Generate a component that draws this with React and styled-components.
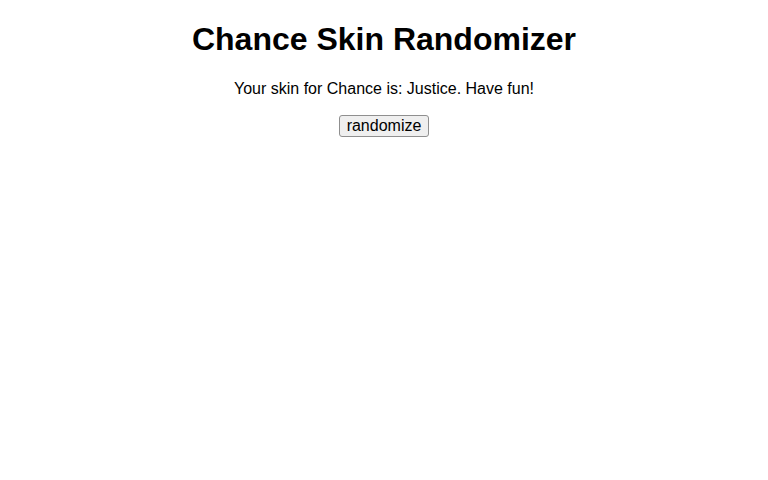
import React, { useState } from "react";
import styled, { createGlobalStyle } from "styled-components";

const skins = ["Justice", "Original", "Dark Matter", "Sakura", "Vanguard"];

const GlobalStyle = createGlobalStyle`
	body {
		margin: 8px;
		background: #ffffff;
		font-family: "Liberation Sans", Arial, sans-serif;
		color: #000000;
	}
`;

const Page = styled.main`
	display: flex;
	flex-direction: column;
	align-items: center;
	text-align: center;
`;

const Title = styled.h1`
	font-size: 32px;
	font-weight: bold;
	margin: 13px 0 22px;
`;

const Message = styled.p`
	font-size: 16px;
	margin: 0 0 17px;
`;

const RandomButton = styled.button`
	font-family: "Liberation Sans", Arial, sans-serif;
	font-size: 16px;
	line-height: 18px;
	color: #000000;
	background: #efefef;
	border: 1px solid #8f8f8f;
	border-radius: 3px;
	padding: 1px 7px;
	cursor: pointer;
`;

const App = () => {
	const [skin, setSkin] = useState(skins[0]);

	return (
		<Page>
			<GlobalStyle />
			<Title>Chance Skin Randomizer</Title>
			<Message>Your skin for Chance is: {skin}. Have fun!</Message>
			<div>
				<RandomButton
					onClick={() => setSkin(skins[Math.floor(Math.random() * skins.length)])}
				>
					randomize
				</RandomButton>
			</div>
		</Page>
	);
};

export default App;
